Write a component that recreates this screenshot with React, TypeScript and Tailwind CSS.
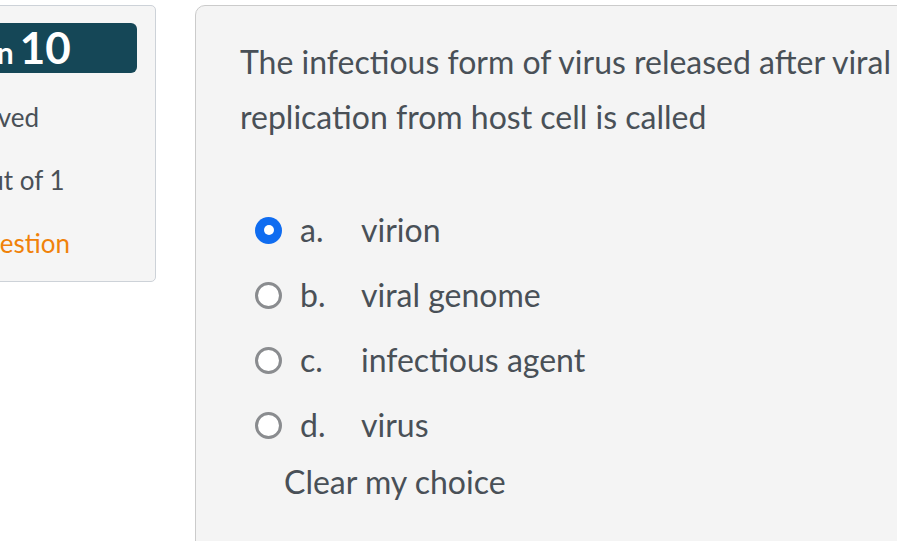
import React from "react";

const options = [
  { letter: "a.", text: "virion", checked: true },
  { letter: "b.", text: "viral genome", checked: false },
  { letter: "c.", text: "infectious agent", checked: false },
  { letter: "d.", text: "virus", checked: false },
];

function Radio({ checked }: { checked: boolean }) {
  if (checked) {
    return (
      <span className="flex h-[27px] w-[27px] shrink-0 items-center justify-center rounded-full bg-[#0f6cf0]">
        <span className="h-[10px] w-[10px] rounded-full bg-white" />
      </span>
    );
  }
  return <span className="h-[27px] w-[27px] shrink-0 rounded-full border-[3px] border-[#8a8c8f] bg-white" />;
}

function FlagIcon() {
  return (
    <svg width="26" height="28" viewBox="0 0 16 16" className="shrink-0">
      <path d="M3 1v14" stroke="#495057" strokeWidth="1.5" />
      <path d="M3.5 2h9l-2 3.5 2 3.5h-9z" fill="none" stroke="#495057" strokeWidth="1.2" strokeLinejoin="round" />
    </svg>
  );
}

export default function App() {
  return (
    <div className="flex h-[541px] items-start overflow-hidden bg-white font-['Lato',sans-serif] text-[#495057]">
      {/* info */}
      <div className="-ml-[140px] mt-[5px] w-[296px] shrink-0 rounded-[5px] border border-[#cdd2d8] bg-[#f5f5f5] pb-[21px] pl-[20px] pr-[18px] pt-[17px]">
        <h3 className="flex h-[50px] items-baseline gap-[6px] rounded-[6px] bg-[#154757] pl-[9px] pt-[4px] font-bold text-white">
          <span className="text-[30px]">Question</span>
          <span className="text-[44px] leading-[40px]">10</span>
        </h3>
        <div className="mt-[28px] flex flex-col gap-[30px] text-[26px] leading-[33px]">
          <div>Answer saved</div>
          <div>Marked out of 1</div>
          <div className="flex items-center gap-[10px] text-[#f0820a]">
            <FlagIcon />
            <span>Flag question</span>
          </div>
        </div>
      </div>

      {/* question */}
      <div className="ml-[39px] mt-[5px] h-[600px] w-[760px] shrink-0 rounded-[10px] border border-[#cbcbcb] bg-[#f4f4f4] pl-[44px] pt-[28px]">
        <p className="w-[690px] text-[32px] leading-[55px]">
          The infectious form of virus released after viral replication from host cell is called
        </p>
        <div className="mt-[66px] flex flex-col gap-[25px] pl-[15px] text-[32px]">
          {options.map((o) => (
            <label key={o.letter} className="flex h-[40px] items-center">
              <Radio checked={o.checked} />
              <span className="ml-[18px] w-[61px]">{o.letter}</span>
              <span>{o.text}</span>
            </label>
          ))}
        </div>
        <div className="mt-[13px] pl-[44px] text-[32px]">Clear my choice</div>
      </div>
    </div>
  );
}
